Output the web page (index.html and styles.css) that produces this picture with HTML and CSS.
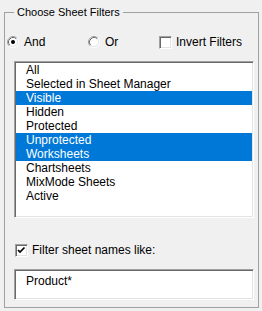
FILE: index.html
```html
<!DOCTYPE html>
<html>
<head>
<meta charset="utf-8">
<link rel="stylesheet" href="styles.css">
</head>
<body>
<fieldset class="group">
  <legend class="group-title">Choose Sheet Filters</legend>
  <div class="mode-row">
    <label class="opt opt-and">
      <svg class="radio" width="12" height="12" viewBox="0 0 12 12">
        <circle cx="6" cy="6" r="5" fill="#fff"/>
        <path d="M2.11 9.89 A5.5 5.5 0 0 1 9.89 2.11" fill="none" stroke="#a0a0a0"/>
        <path d="M9.89 2.11 A5.5 5.5 0 0 1 2.11 9.89" fill="none" stroke="#ffffff"/>
        <path d="M2.82 9.18 A4.5 4.5 0 0 1 9.18 2.82" fill="none" stroke="#696969"/>
        <path d="M9.18 2.82 A4.5 4.5 0 0 1 2.82 9.18" fill="none" stroke="#e3e3e3"/>
        <circle cx="6" cy="6" r="2" fill="#000"/>
      </svg>
      <span>And</span>
    </label>
    <label class="opt opt-or">
      <svg class="radio" width="12" height="12" viewBox="0 0 12 12">
        <circle cx="6" cy="6" r="5" fill="#fff"/>
        <path d="M2.11 9.89 A5.5 5.5 0 0 1 9.89 2.11" fill="none" stroke="#a0a0a0"/>
        <path d="M9.89 2.11 A5.5 5.5 0 0 1 2.11 9.89" fill="none" stroke="#ffffff"/>
        <path d="M2.82 9.18 A4.5 4.5 0 0 1 9.18 2.82" fill="none" stroke="#696969"/>
        <path d="M9.18 2.82 A4.5 4.5 0 0 1 2.82 9.18" fill="none" stroke="#e3e3e3"/>
      </svg>
      <span>Or</span>
    </label>
    <label class="opt opt-invert">
      <span class="check"></span>
      <span>Invert Filters</span>
    </label>
  </div>
  <div class="list">
    <div class="item">All</div>
    <div class="item">Selected in Sheet Manager</div>
    <div class="item sel">Visible</div>
    <div class="item">Hidden</div>
    <div class="item">Protected</div>
    <div class="item sel">Unprotected</div>
    <div class="item sel">Worksheets</div>
    <div class="item">Chartsheets</div>
    <div class="item">MixMode Sheets</div>
    <div class="item">Active</div>
  </div>
  <label class="opt filter-row">
    <span class="check">
      <svg width="11" height="11" viewBox="0 0 11 11"><path d="M2 5 L4 7 L8.5 2.5" fill="none" stroke="#000" stroke-width="1.7"/></svg>
    </span>
    <span>Filter sheet names like:</span>
  </label>
  <div class="textbox">Product*</div>
</fieldset>
</body>
</html>
```
FILE: styles.css
```css
html, body {
  margin: 0;
  padding: 0;
}
body {
  width: 262px;
  height: 311px;
  background: #f0f0f0;
  font-family: "Liberation Sans", Arial, sans-serif;
  font-size: 12px;
  color: #000;
  overflow: hidden;
}
.group {
  box-sizing: border-box;
  width: 255px;
  margin: 5px 0 0 4px;
  padding: 0 0 7px 0;
  border: 1px solid #a0a0a0;
}
.group-title {
  margin-left: 9px;
  padding: 0 3px;
  font-size: 11px;
  line-height: 14px;
}
.mode-row {
  display: grid;
  grid-template-columns: 81px 71px auto;
  margin: 15px 0 0 2px;
  height: 16px;
}
.opt {
  display: flex;
  align-items: center;
  height: 16px;
  line-height: 16px;
}
.opt-and, .opt-or {
  gap: 5px;
}
.radio {
  flex: none;
  width: 12px;
  height: 12px;
}
.opt-invert {
  gap: 4px;
}
.check {
  box-sizing: border-box;
  flex: none;
  display: flex;
  align-items: center;
  justify-content: center;
  width: 13px;
  height: 13px;
  background: #fff;
  border: 1px solid;
  border-color: #a0a0a0 #ffffff #ffffff #a0a0a0;
  box-shadow: inset 1px 1px #696969, inset -1px -1px #e3e3e3;
}
.list {
  box-sizing: border-box;
  width: 240px;
  height: 157px;
  margin: 11px 0 0 9px;
  background: #fff;
  border: 1px solid;
  border-color: #a0a0a0 #ffffff #ffffff #a0a0a0;
  box-shadow: inset 1px 1px #696969, inset -1px -1px #e3e3e3;
  padding: 1px;
}
.item {
  height: 14px;
  line-height: 14px;
  padding-left: 10px;
  white-space: nowrap;
}
.item.sel {
  background: #0078d7;
  color: #fff;
}
.filter-row {
  gap: 4px;
  margin: 24px 0 0 10px;
}
.textbox {
  box-sizing: border-box;
  width: 240px;
  height: 31px;
  margin: 11px 0 0 9px;
  background: #fff;
  border: 1px solid;
  border-color: #a0a0a0 #ffffff #ffffff #a0a0a0;
  box-shadow: inset 1px 1px #696969, inset -1px -1px #e3e3e3;
  padding: 4px 0 0 11px;
  line-height: 14px;
}
```
